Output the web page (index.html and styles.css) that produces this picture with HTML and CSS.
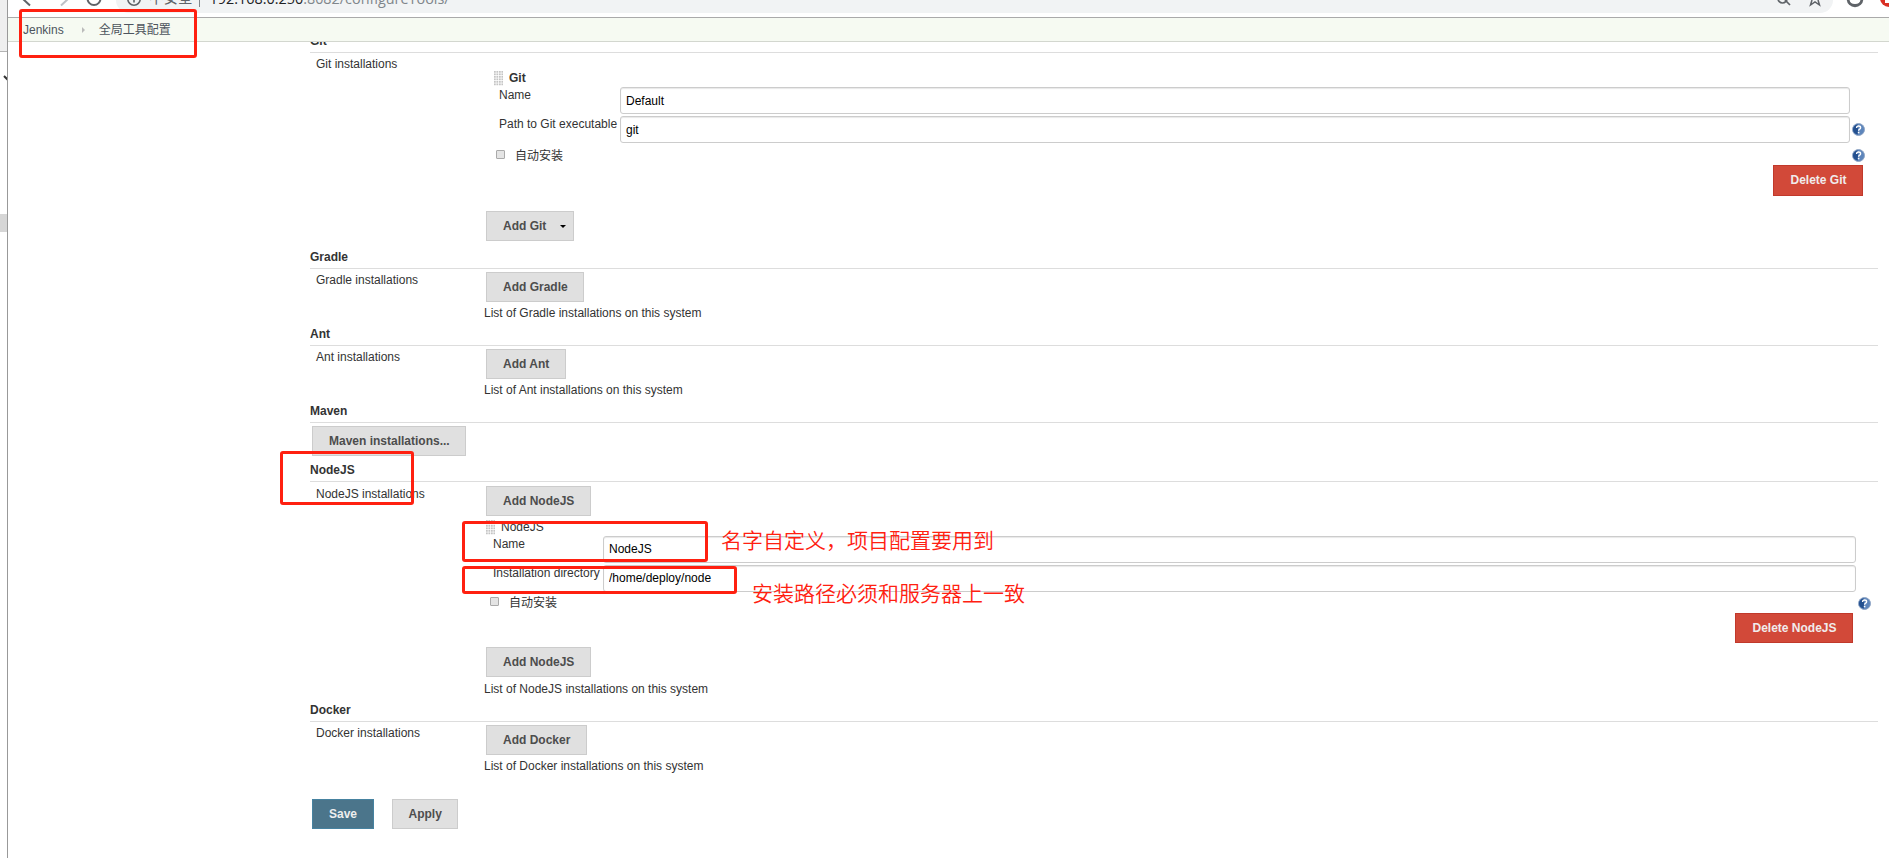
FILE: index.html
```html
<!DOCTYPE html>
<html lang="zh-CN">
  <head>
    <meta charset="utf-8" />
    <title>全局工具配置 [Jenkins]</title>
    <link rel="stylesheet" href="styles.css" />
  </head>
  <body>
    <svg class="sprite" width="0" height="0">
      <symbol id="help" viewBox="0 0 13 13">
        <circle cx="6.5" cy="6.5" r="6" fill="#5d85bb" stroke="#8fa5c4" />
        <path d="M6 1.500v10a5 5 0 0 1 0-10z" fill="#24508f" />
        <path d="M4.600 5q0-2 2-2t2 1.700q0 1-1 1.500t-1 1.600" fill="none" stroke="#fff" stroke-width="1.400" />
        <rect x="5.800" y="8.800" width="1.600" height="1.500" fill="#fff" />
      </symbol>
      <pattern id="dots" width="2.5" height="2.5" patternUnits="userSpaceOnUse">
        <rect width="1.800" height="1.800" fill="#c4c4c4" />
      </pattern>
      <symbol id="grip" viewBox="0 0 9 15">
        <rect width="9" height="15" fill="url(#dots)" />
      </symbol>
    </svg>

    <div class="behind">
      <div class="behind-top"></div>
      <svg class="behind-chevron" width="7" height="8"><path d="M4 1l4 4" stroke="#333" stroke-width="2" /></svg>
      <div class="behind-thumb"></div>
    </div>

    <div class="window">
      <div class="toolbar">
        <svg class="nav-icons" width="108" height="17" fill="none" stroke-width="2">
          <path d="M15-1l7 6.500" stroke="#5f6368" />
          <path d="M60-1l-7 6.500" stroke="#bdc1c6" />
          <path d="M79.500-1.500a6.500 6.500 0 0 0 13 0" stroke="#5f6368" />
        </svg>
        <div class="address">
          <svg class="info" width="14" height="17" fill="none" stroke="#5f6368">
            <circle cx="7" cy="-1" r="6.200" stroke-width="1.600" />
            <path d="M7-2v4.500" stroke-width="1.600" />
          </svg>
          <span class="insecure">不安全</span>
          <span class="divider"></span>
          <span class="url"><b>192.168.0.250</b>:8082/configureTools/</span>
          <svg class="address-icons" width="46" height="17" fill="none" stroke="#5f6368" stroke-width="1.700">
            <circle cx="5.500" cy="-1.500" r="4.500" />
            <path d="M8 0l5 5" />
            <path d="M35 0l-1.500 5 4.500-3 4.500 3L41 0" stroke-width="1.500" />
          </svg>
        </div>
        <svg class="user-icons" width="56" height="17">
          <circle cx="22" cy="-1" r="8.300" fill="#5f6368" />
          <path d="M16.500-1h3.500q2 2 4 0h3.500q0 5-5.500 5t-5.500-5z" fill="#fff" />
          <circle cx="56" cy="-2" r="9" fill="#d93025" />
          <rect x="52" y="-2" width="6" height="5" fill="#fff" />
        </svg>
      </div>

      <div class="breadcrumb">
        <a>Jenkins</a>
        <span class="crumb-arrow"></span>
        <a>全局工具配置</a>
      </div>

      <div class="config">
        <div class="section first">
          <h3>Git</h3>
          <div class="row">
            <div class="label">Git installations</div>
            <div class="setting">
              <div class="tool git-tool">
                <div class="tool-title"><svg width="9" height="15"><use href="#grip" /></svg><b>Git</b></div>
                <div class="field">
                  <label>Name</label>
                  <input type="text" value="Default" />
                </div>
                <div class="field">
                  <label>Path to Git executable</label>
                  <input type="text" value="git" />
                  <svg class="help" width="13" height="13"><use href="#help" /></svg>
                </div>
                <div class="auto">
                  <span class="check"></span><span>自动安装</span>
                  <svg class="help" width="13" height="13"><use href="#help" /></svg>
                </div>
                <div class="remove"><button class="danger">Delete Git</button></div>
              </div>
              <button class="add-git">Add Git<span class="caret"></span></button>
            </div>
          </div>
        </div>

        <div class="section">
          <h3>Gradle</h3>
          <div class="row">
            <div class="label">Gradle installations</div>
            <div class="setting">
              <button>Add Gradle</button>
              <p>List of Gradle installations on this system</p>
            </div>
          </div>
        </div>

        <div class="section">
          <h3>Ant</h3>
          <div class="row">
            <div class="label">Ant installations</div>
            <div class="setting">
              <button>Add Ant</button>
              <p>List of Ant installations on this system</p>
            </div>
          </div>
        </div>

        <div class="section">
          <h3>Maven</h3>
          <button>Maven installations...</button>
        </div>

        <div class="section nodejs">
          <h3>NodeJS</h3>
          <div class="row">
            <div class="label">NodeJS installations</div>
            <div class="setting">
              <button>Add NodeJS</button>
              <div class="tool node-tool">
                <div class="tool-title"><svg width="9" height="15"><use href="#grip" /></svg>NodeJS</div>
                <div class="field">
                  <label>Name</label>
                  <input type="text" value="NodeJS" />
                </div>
                <div class="field">
                  <label>Installation directory</label>
                  <input type="text" value="/home/deploy/node" />
                </div>
                <div class="auto">
                  <span class="check"></span><span>自动安装</span>
                  <svg class="help" width="13" height="13"><use href="#help" /></svg>
                </div>
                <div class="remove"><button class="danger">Delete NodeJS</button></div>
              </div>
              <button>Add NodeJS</button>
              <p>List of NodeJS installations on this system</p>
            </div>
          </div>
        </div>

        <div class="section">
          <h3>Docker</h3>
          <div class="row">
            <div class="label">Docker installations</div>
            <div class="setting">
              <button>Add Docker</button>
              <p>List of Docker installations on this system</p>
            </div>
          </div>
        </div>

        <div class="actions">
          <button class="primary">Save</button>
          <button>Apply</button>
        </div>
      </div>
    </div>

    <!-- annotations drawn over the page -->
    <div class="mark mark-crumb"></div>
    <div class="mark mark-section"></div>
    <div class="mark mark-name"></div>
    <div class="mark mark-dir"></div>
    <div class="note note-name">名字自定义，项目配置要用到</div>
    <div class="note note-dir">安装路径必须和服务器上一致</div>
  </body>
</html>
```
FILE: styles.css
```css
* {
  box-sizing: border-box;
}

body {
  display: flex;
  position: relative;
  margin: 0;
  height: 858px;
  overflow: hidden;
  background: #fff;
  color: #333;
  font: 12px/14px "Liberation Sans", "Noto Sans CJK SC", sans-serif;
}

svg {
  display: block;
  flex: none;
}

.sprite {
  position: absolute;
}

/* strip of the window behind */
.behind {
  width: 8px;
  flex: none;
  border-right: 1px solid #999;
}

.behind-top {
  height: 52px;
  background: #efefef;
  border-bottom: 1px solid #b4b4b4;
}

.behind-chevron {
  margin-top: 23px;
}

.behind-thumb {
  height: 18px;
  margin-top: 131px;
  background: #d6d6d6;
}

.window {
  flex: 1;
  min-width: 0;
}

.toolbar {
  display: flex;
  height: 18px;
  overflow: hidden;
  border-bottom: 1px solid #aaa;
}

.address {
  display: flex;
  flex: 1;
  height: 13px;
  padding: 0 10px 0 11px;
  background: #f1f3f4;
  border-radius: 0 0 14px 14px;
  color: #5f6368;
}

.insecure {
  margin: -12px 0 0 8px;
  font-size: 14.5px;
  line-height: 20px;
}

.divider {
  width: 1px;
  height: 7px;
  margin: 0 10px 0 6px;
  background: #80868b;
}

.url {
  flex: 1;
  margin-top: -11px;
  color: #80868b;
  font: 14.4px/20px "Open Sans", sans-serif;
  white-space: nowrap;
}

.url b {
  color: #202124;
  font-weight: normal;
}

.breadcrumb {
  display: flex;
  align-items: center;
  height: 24px;
  padding-left: 15px;
  background: #f6faf2;
  border-bottom: 1px solid #d3d7cf;
  color: #4d545d;
}

.crumb-arrow {
  margin: 0 14px 0 18px;
  border: 3px solid transparent;
  border-left-color: #bbb;
  border-right: 0;
}

.config {
  height: 816px;
  overflow: hidden;
  padding: 0 11px 0 302px;
}

.section {
  margin-bottom: 7px;
}

.first {
  margin-top: -8px;
  margin-bottom: 9px;
}

h3 {
  height: 19px;
  margin: 0;
  border-bottom: 1px solid #ddd;
  font-size: 12px;
}

.row {
  display: flex;
}

.label {
  width: 174px;
  padding: 4px 0 0 6px;
}

.setting {
  flex: 1;
}

button {
  display: block;
  height: 30px;
  margin: 3px 0 0 2px;
  padding: 0 15.5px 0 16px;
  background: #e0e0e0;
  border: 1px solid #ccc;
  color: #4d4d4d;
  font: bold 12px/28px "Liberation Sans", sans-serif;
}

p {
  margin: 4px 0 0;
}

.danger {
  margin: 0;
  background: #d24939;
  border-color: #c1392b;
  color: #f0ecec;
}

.primary {
  background: #4b758b;
  border-color: #4682a0;
  color: #eee;
}

.git-tool {
  padding: 18px 13px 0 10px;
}

.tool-title {
  display: flex;
  gap: 6px;
  height: 16px;
}

.field {
  display: flex;
  height: 27px;
  margin-bottom: 2px;
}

.field label {
  padding: 1px 0 0 5px;
}

.git-tool .field label {
  width: 126px;
}

.field input {
  flex: 1;
  height: 27px;
  padding: 0 5px;
  border: 1px solid #ccc;
  border-radius: 3px;
  box-shadow: inset 0 1px 1px #e8e8e8;
  color: #000;
  font: 12px "Liberation Sans", sans-serif;
}

.git-tool .field {
  padding-right: 15px;
}

.git-tool .field .help {
  margin: 7px -15px 0 2px;
}

.auto {
  display: flex;
  height: 20px;
  padding: 4px 0 0 2px;
}

.check {
  width: 9px;
  height: 9px;
  margin: 1px 10px 0 0;
  background: #e4e4e4;
  border: 1px solid #aaa;
  border-radius: 1px;
}

.auto .help {
  margin-left: auto;
}

.remove {
  display: flex;
  justify-content: flex-end;
}

.git-tool .remove {
  padding-right: 2px;
}

.git-tool .danger {
  height: 31px;
  padding-bottom: 1px;
}

.add-git {
  display: flex;
  align-items: center;
  margin-top: 15px;
  padding-right: 7px;
}

.caret {
  margin-left: 14px;
  border: 3.5px solid transparent;
  border-top-color: #000;
  border-bottom: 0;
}

.nodejs .label {
  padding-top: 5px;
}

.nodejs .setting > button:first-child {
  margin-top: 4px;
}

.nodejs p {
  margin-top: 5px;
}

.node-tool {
  padding: 4px 7px 1px 2px;
}

.node-tool .field label {
  width: 117px;
  padding-left: 7px;
}

.node-tool .field {
  padding-right: 15px;
}

.node-tool .field input {
  padding-bottom: 2px;
}

.node-tool .auto {
  height: 19px;
  padding: 2px 0 0 4px;
}

.node-tool .auto .help {
  margin-top: 1px;
}

.node-tool .remove {
  padding-right: 18px;
}

.actions {
  display: flex;
  gap: 16px;
  padding-top: 16px;
}

/* annotations */
.mark {
  position: absolute;
  border: 3px solid #ff2010;
  border-radius: 3px;
}

.mark-crumb {
  left: 19px;
  top: 9px;
  width: 178px;
  height: 49px;
}

.mark-section {
  left: 280px;
  top: 451px;
  width: 134px;
  height: 54px;
}

.mark-name {
  left: 462px;
  top: 521px;
  width: 246px;
  height: 41px;
}

.mark-dir {
  left: 462px;
  top: 566px;
  width: 275px;
  height: 28px;
}

.note {
  position: absolute;
  color: #ff2010;
  font: 350 21px/28px "Noto Sans CJK SC", sans-serif;
  white-space: nowrap;
}

.note-name {
  left: 721px;
  top: 525px;
}

.note-dir {
  left: 752px;
  top: 578px;
}
```
